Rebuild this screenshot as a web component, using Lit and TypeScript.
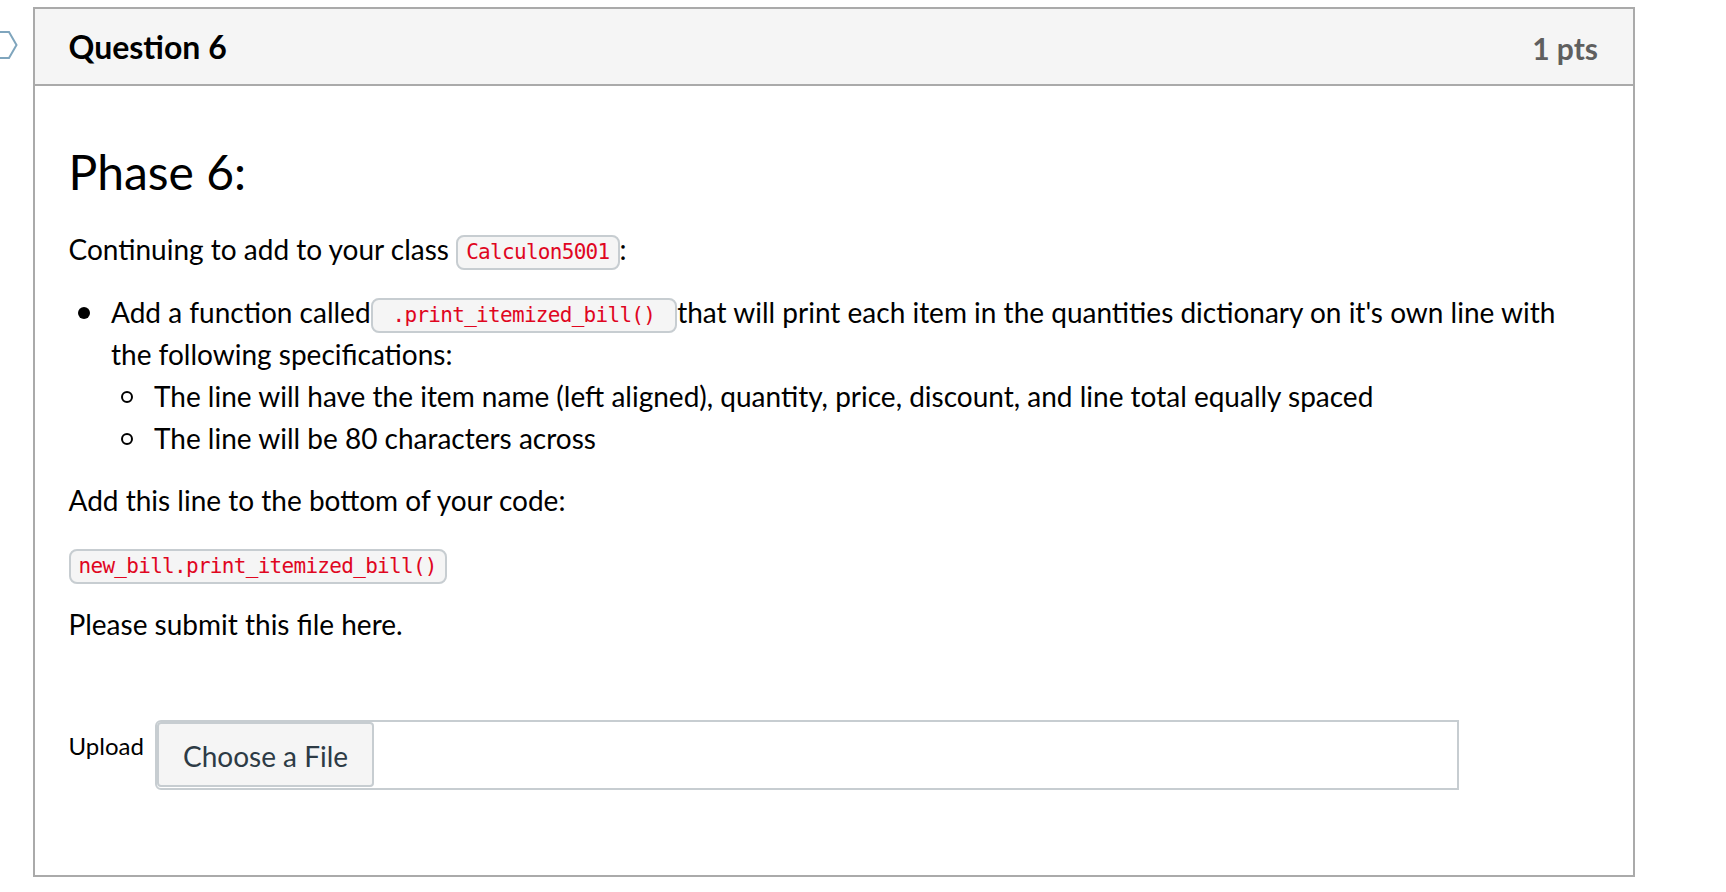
import { LitElement, html, css } from "lit";
import { customElement } from "lit/decorators.js";

@customElement("app-root")
export class AppRoot extends LitElement {
  static styles = css`
    :host { display: block; height: 892px; background: #fff; position: relative; overflow: hidden; font-family: "Lato", sans-serif; color: #000; }
    .page { padding: 7px 0 0 33px; }
    .flag { position: absolute; left: 0; top: 30px; }
    .card { width: 1602px; height: 870px; box-sizing: border-box; border: 2px solid #aaa; }
    .head { height: 77px; box-sizing: border-box; background: #f5f5f5; border-bottom: 2px solid #aaa; display: flex; justify-content: space-between; padding: 0 35px 0 33.5px; }
    .title { font-size: 32px; font-weight: 700; line-height: 1; margin-top: 22px; color: #000; }
    .pts { font-size: 30px; font-weight: 700; color: #5f5f5f; margin-top: 24px; line-height: 1; }
    .body { padding: 0 33px 0 33.5px; font-size: 28px; line-height: 42px; }
    h2 { font-size: 48px; font-weight: 400; line-height: 60px; margin: 56px 0 0; }
    p { margin: 0; }
    .intro { margin-top: 26px; }
    ul { margin: 21px 0 0; padding: 0 0 0 42.5px; list-style: none; }
    ul ul { margin: 0; padding-left: 43px; }
    li { position: relative; }
    li::before { content: ""; position: absolute; left: -33px; top: 16px; width: 12px; height: 12px; border-radius: 50%; background: #000; }
    ul ul li::before { box-sizing: border-box; background: none; border: 2.5px solid #000; }
    code { font-family: "DejaVu Sans Mono", monospace; font-size: 21px; letter-spacing: -0.7px; line-height: 1; color: #e0061f; background: #f5f5f5; border: 2px solid #c7cdd1; border-radius: 8px; padding: 3px 8px 4px; white-space: pre-wrap; vertical-align: 1px; }
    .after { margin-top: 20px; }
    .line { margin-top: 21px; }
    .submit { margin-top: 19px; }
    .upload { display: flex; align-items: flex-start; margin-top: 75px; }
    .label { font-size: 24px; line-height: 30px; margin-top: 11px; width: 86.5px; flex: none; }
    .field { width: 1304px; height: 70px; box-sizing: border-box; border: 2px solid #c7cdd1; border-radius: 6px 0 0 6px; display: flex; }
    .btn { width: 217px; height: 65px; box-sizing: border-box; background: #f5f5f5; border: 2px solid #c7cdd1; border-radius: 4px; font-size: 28px; line-height: 64px; color: #2d3b45; text-align: center; }
  `;

  render() {
    return html`
      <svg class="flag" width="18" height="30" viewBox="0 0 18 30" aria-hidden="true">
        <path d="M-6 2H9L16.500 15L9 28H-6Z" fill="#fff" stroke="#7fa5bd" stroke-width="2"/>
      </svg>
      <div class="page">
        <div class="card">
          <div class="head">
            <div class="title">Question 6</div>
            <div class="pts">1 pts</div>
          </div>
          <div class="body">
            <h2>Phase 6:</h2>
            <p class="intro">Continuing to add to your class <code>Calculon5001</code>:</p>
            <ul>
              <li>Add a function called<code> .print_itemized_bill() </code>that will print each item in the quantities dictionary on it's own line with the following specifications:
                <ul>
                  <li>The line will have the item name (left aligned), quantity, price, discount, and line total equally spaced</li>
                  <li>The line will be 80 characters across</li>
                </ul>
              </li>
            </ul>
            <p class="after">Add this line to the bottom of your code:</p>
            <p class="line"><code>new_bill.print_itemized_bill()</code></p>
            <p class="submit">Please submit this file here.</p>
            <div class="upload">
              <div class="label">Upload</div>
              <div class="field"><div class="btn">Choose a File</div></div>
            </div>
          </div>
        </div>
      </div>
    `;
  }
}
